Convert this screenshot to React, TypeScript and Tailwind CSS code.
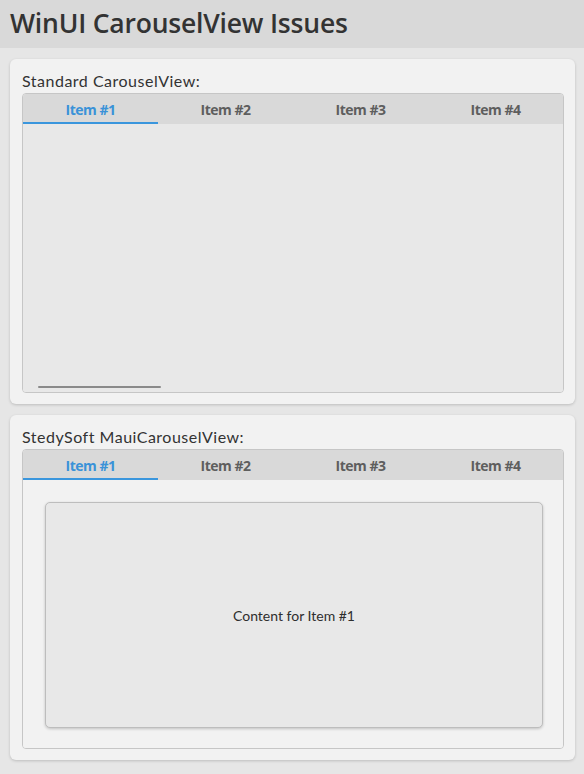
import React from 'react';

const tabs = ['Item #1', 'Item #2', 'Item #3', 'Item #4'];

function TabBar() {
  return (
    <div className="grid grid-cols-4 h-[30px] bg-[#d9d9d9]">
      {tabs.map((t, i) => (
        <div
          key={t}
          className={`flex items-center justify-center pt-[2px] text-[14px] font-bold tracking-[-0.5px] border-b-[2px] ${
            i === 0 ? 'text-[#3a92d8] border-[#3a96dd]' : 'text-[#5e5e5e] border-transparent'
          }`}
          style={{ fontFamily: '"Open Sans", sans-serif' }}
        >
          {t}
        </div>
      ))}
    </div>
  );
}

function Card({ label, children }: { label: string; children: React.ReactNode }) {
  return (
    <div className="rounded-[6px] bg-[#f2f2f2] shadow-[0_1px_3px_rgba(0,0,0,0.18)] pl-[12px] pr-[11px] pt-[12px] pb-[11px]">
      <div
        className="h-[22px] text-[16px] font-normal text-[#333333] leading-[20px] tracking-[0.5px]"
        style={{ fontFamily: 'Lato, sans-serif' }}
      >
        {label}
      </div>
      <div className="h-[300px] flex flex-col rounded-[4px] border border-[#c6c6c6] overflow-hidden">
        <TabBar />
        {children}
      </div>
    </div>
  );
}

export default function App() {
  return (
    <div className="w-full h-[774px] bg-[#e6e6e6] flex flex-col">
      <div className="h-[48px] bg-[#d9d9d9] px-[10px] flex items-center">
        <h1
          className="text-[26.5px] font-semibold text-[#333333] tracking-[-0.2px]"
          style={{ fontFamily: '"Open Sans", sans-serif' }}
        >
          WinUI CarouselView Issues
        </h1>
      </div>
      <div className="pl-[10px] pr-[9px] pt-[11px] flex flex-col gap-[11px]">
        <Card label="Standard CarouselView:">
          <div className="flex-1 bg-[#e8e8e8] flex flex-col justify-end px-[15px] pb-[4px]">
            <div className="w-[123px] h-[2px] bg-[#8a8a8a] rounded-full" />
          </div>
        </Card>
        <Card label="StedySoft MauiCarouselView:">
          <div className="flex-1 bg-[#f2f2f2] pl-[22px] pr-[20px] pt-[22px] pb-[20px] flex">
            <div className="flex-1 rounded-[5px] border border-[#bdbdbd] bg-[#e8e8e8] shadow-[0_1px_3px_rgba(0,0,0,0.2)] flex items-center justify-center">
              <span className="text-[14px] text-[#2e2e2e]" style={{ fontFamily: 'Lato, sans-serif' }}>
                Content for Item #1
              </span>
            </div>
          </div>
        </Card>
      </div>
    </div>
  );
}
